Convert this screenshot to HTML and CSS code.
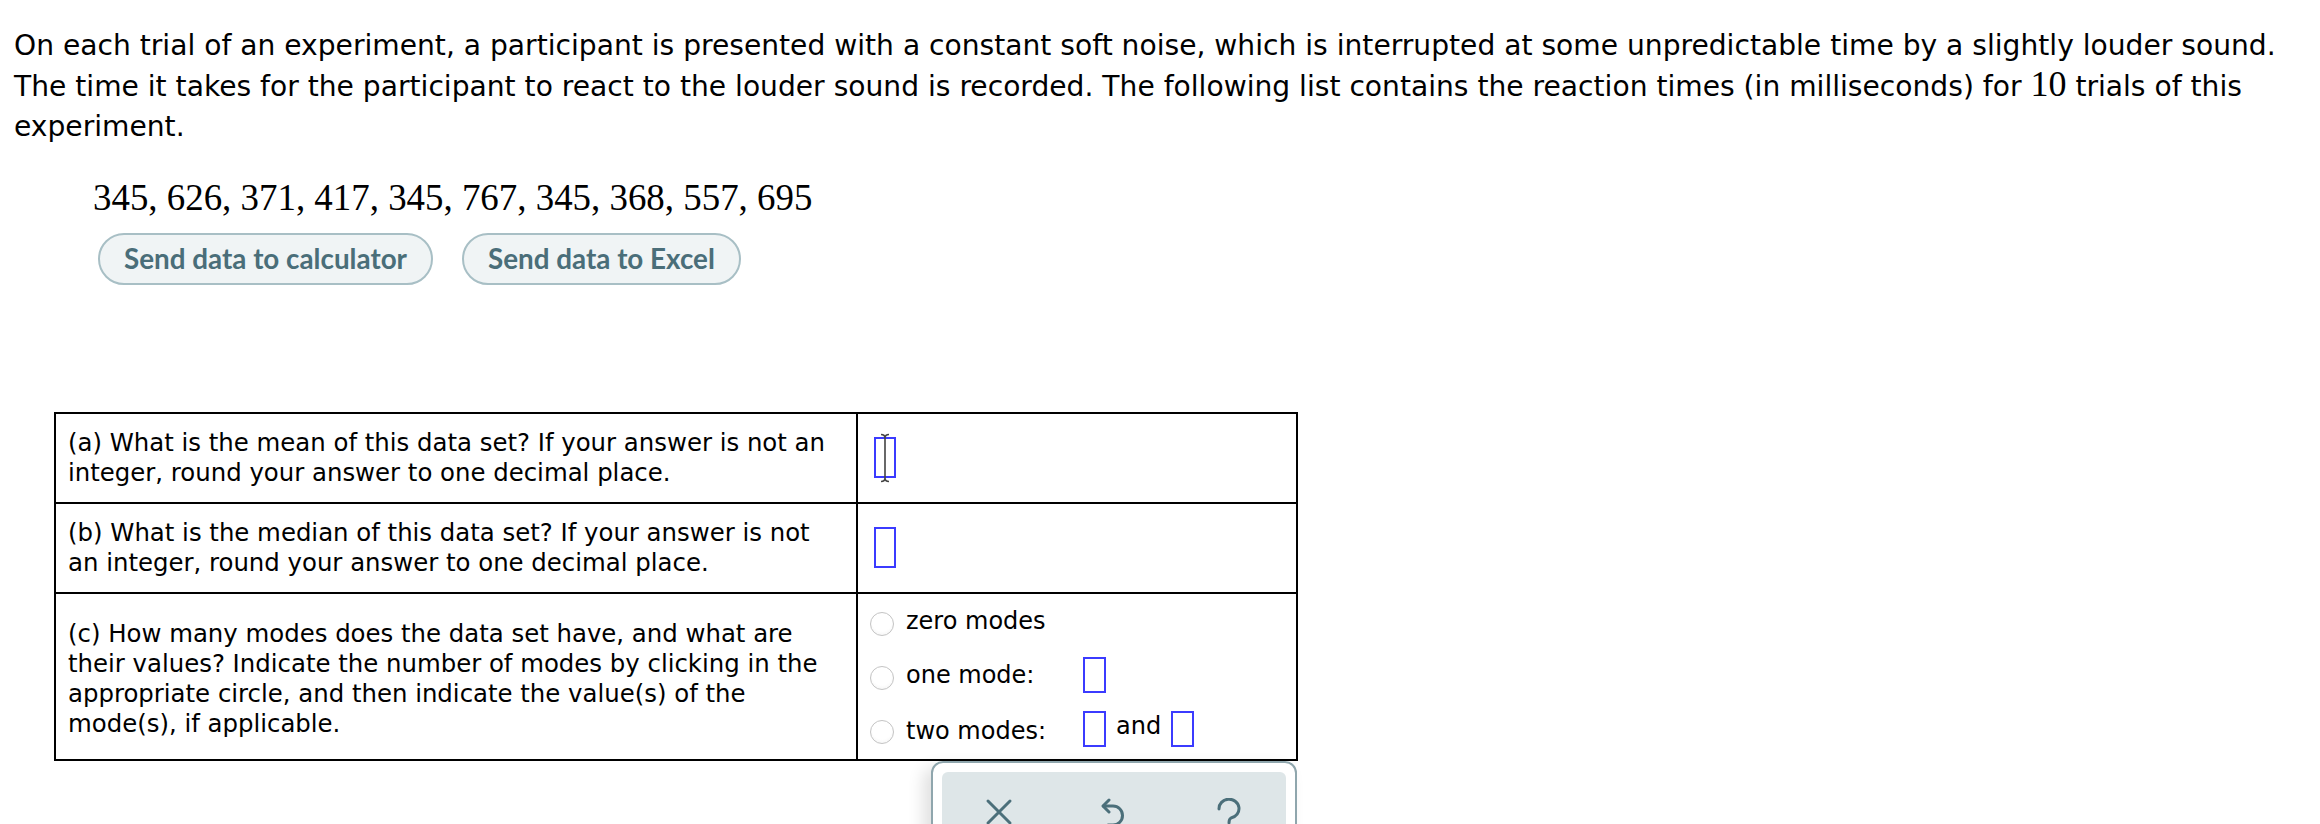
FILE: index.html
```html
<!DOCTYPE html>
<html>
<head>
<meta charset="utf-8">
<link rel="stylesheet" href="styles.css">
</head>
<body>
<div class="page">
  <p class="intro">On each trial of an experiment, a participant is presented with a constant soft noise, which is interrupted at some unpredictable time by a slightly louder sound. The time it takes for the participant to react to the louder sound is recorded. The following list contains the reaction times (in milliseconds) for <span class="num">10</span> trials of this experiment.</p>
  <div class="data">345, 626, 371, 417, 345, 767, 345, 368, 557, 695</div>
  <div class="actions">
    <button class="pill">Send data to calculator</button>
    <button class="pill">Send data to Excel</button>
  </div>
  <div class="qwrap">
    <table class="qtable">
      <tr>
        <td class="qtext">(a) What is the mean of this data set? If your answer is not an integer, round your answer to one decimal place.</td>
        <td class="qans"><span class="blank tall focus"><svg class="ibeam" width="12" height="50" viewBox="0 0 12 50"><path d="M2 1.5 Q6 1.5 6 5 Q6 1.5 10 1.5 M6 5 V45 M2 48.5 Q6 48.5 6 45 Q6 48.5 10 48.5" fill="none" stroke="#444" stroke-width="1.6"/></svg></span></td>
      </tr>
      <tr>
        <td class="qtext">(b) What is the median of this data set? If your answer is not an integer, round your answer to one decimal place.</td>
        <td class="qans"><span class="blank tall"></span></td>
      </tr>
      <tr>
        <td class="qtext qtext-c">(c) How many modes does the data set have, and what are their values? Indicate the number of modes by clicking in the appropriate circle, and then indicate the value(s) of the mode(s), if applicable.</td>
        <td class="qans qans-c">
          <div class="options">
            <div class="opt"><span class="radio"></span><span class="olabel">zero modes</span></div>
            <div class="opt"><span class="radio"></span><span class="olabel">one mode:</span><span class="blank"></span></div>
            <div class="opt opt-two"><span class="radio"></span><span class="olabel">two modes:</span><span class="blank"></span><span class="and">and</span><span class="blank"></span></div>
          </div>
        </td>
      </tr>
    </table>
    <div class="keypad-row">
      <div class="keypad">
        <div class="kp-panel">
          <div class="kp-btn"><svg width="28" height="28" viewBox="0 0 28 28"><path d="M3 3 L25 25 M25 3 L3 25" stroke="#4b6f7a" stroke-width="3" fill="none" stroke-linecap="round"/></svg></div>
          <div class="kp-btn"><svg width="28" height="30" viewBox="0 0 28 30"><path d="M9 2 L3 8 L9 14" stroke="#4b6f7a" stroke-width="3" fill="none" stroke-linecap="round" stroke-linejoin="round"/><path d="M3.5 8 H13 A9.5 9.5 0 1 1 13 27 H8" stroke="#4b6f7a" stroke-width="3" fill="none" stroke-linecap="round"/></svg></div>
          <div class="kp-btn"><svg width="28" height="30" viewBox="0 0 28 30"><path d="M4 11 A10 9.5 0 1 1 16 20 Q14 21 14 25" stroke="#4b6f7a" stroke-width="3" fill="none" stroke-linecap="round"/></svg></div>
        </div>
      </div>
    </div>
  </div>
</div>
</body>
</html>
```

FILE: styles.css
```css
html, body {
  margin: 0;
  padding: 0;
  background: #ffffff;
  overflow: hidden;
}

body {
  font-family: "DejaVu Sans", Verdana, sans-serif;
  color: #000000;
}

.page {
  padding: 26px 0 0 14px;
}

.intro {
  margin: 0;
  width: 2290px;
  font-size: 28.15px;
  line-height: 40.5px;
}

.num {
  font-family: "Liberation Serif", "Times New Roman", serif;
  font-size: 36px;
  line-height: 0;
}

.data {
  margin-top: 28px;
  padding-left: 79px;
  font-family: "Liberation Serif", "Times New Roman", serif;
  font-size: 36.9px;
  line-height: 44px;
}

.actions {
  display: flex;
  gap: 29px;
  margin-top: 13px;
  padding-left: 84px;
}

.pill {
  height: 52px;
  padding: 0 24px;
  border: 2px solid #a8bfc5;
  border-radius: 26px;
  background: #f0f4f5;
  color: #4a6e79;
  font-family: "Lato", "Open Sans", sans-serif;
  font-weight: 700;
  font-size: 27.8px;
}

.qwrap {
  margin-top: 127px;
  margin-left: 40px;
  width: 1244px;
}

.qtable {
  width: 1244px;
  border-collapse: collapse;
  border: 2px solid #000;
}

.qtable td {
  border: 2px solid #000;
  vertical-align: middle;
}

.qtext {
  width: 776px;
  padding: 14px 12px;
  font-size: 24.4px;
  line-height: 30px;
  height: 58px;
}

.qtext-c {
  padding-top: 25px;
  padding-bottom: 20px;
}

.qans {
  padding: 0 16px;
}

.qans-c {
  vertical-align: top;
}

.blank {
  display: inline-block;
  box-sizing: border-box;
  width: 23px;
  height: 36px;
  border: 2px solid #3b3bff;
  vertical-align: middle;
  position: relative;
}

.blank.tall {
  width: 22px;
  height: 41px;
}

.ibeam {
  position: absolute;
  left: 3px;
  top: -6px;
}

.options {
  display: flex;
  flex-direction: column;
  gap: 18px;
  padding: 1px 0 4px;
}

.opt {
  display: flex;
  align-items: center;
  height: 36px;
  font-size: 24px;
}

.radio {
  box-sizing: border-box;
  width: 24px;
  height: 24px;
  border-radius: 50%;
  border: 1px solid #c4c4c4;
  background: radial-gradient(circle at 50% 40%, #ffffff 55%, #eeeeee 100%);
  margin-left: -4px;
  margin-right: 12px;
  flex: none;
  position: relative;
  top: 3px;
}

.olabel {
  width: 177px;
  flex: none;
}

.opt-two .olabel {
  position: relative;
  top: 2px;
}

.and {
  margin: 0 10px;
  position: relative;
  top: -3px;
}

.keypad-row {
  display: flex;
  justify-content: flex-end;
  margin-top: 0;
  padding-right: 1px;
}

.keypad {
  width: 366px;
  box-sizing: border-box;
  border: 2px solid #8fa6ad;
  border-radius: 12px;
  padding: 9px;
  background: #ffffff;
  box-shadow: -8px 6px 16px rgba(0, 0, 0, 0.12);
}

.kp-panel {
  display: flex;
  background: #dee6e8;
  border-radius: 6px;
  height: 110px;
  padding-top: 26px;
  box-sizing: border-box;
}

.kp-btn {
  flex: 1;
  display: flex;
  justify-content: center;
  align-items: flex-start;
}
```
